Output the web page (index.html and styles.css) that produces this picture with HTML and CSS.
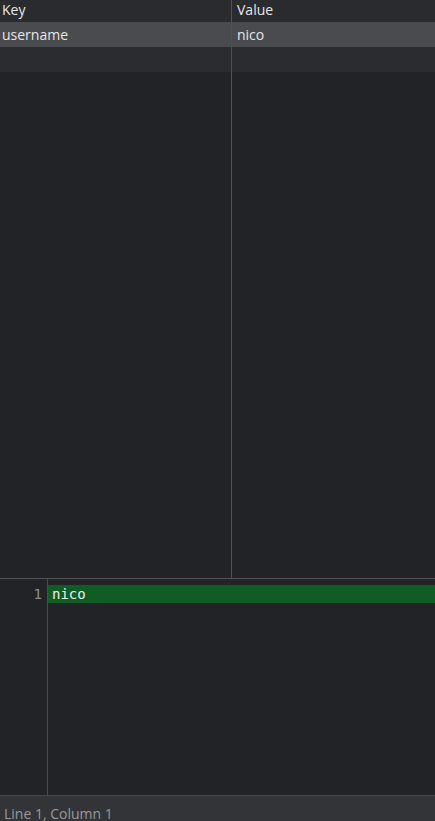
FILE: index.html
```html
<!DOCTYPE html>
<html lang="en">
  <head>
    <meta charset="UTF-8" />
    <meta name="viewport" content="width=device-width, initial-scale=1.0" />
    <title>Storage</title>
    <link rel="stylesheet" href="styles.css">
  </head>

  <body>
    <div class="app">
      <div class="grid">
        <div class="col key-col">
          <div class="cell head">Key</div>
          <div class="cell selected">username</div>
          <div class="cell empty"></div>
        </div>
        <div class="col value-col">
          <div class="cell head">Value</div>
          <div class="cell selected">nico</div>
          <div class="cell empty"></div>
        </div>
      </div>

      <div class="editor">
        <div class="gutter">
          <div class="line-no">1</div>
        </div>
        <div class="code">
          <div class="code-line active">nico</div>
        </div>
      </div>

      <div class="status">Line 1, Column 1</div>
    </div>
  </body>
</html>
```

FILE: styles.css
```css
* {
  box-sizing: border-box;
}

body {
  margin: 0;
  background-color: #222327;
  font-family: "Open Sans", "Noto Sans", sans-serif;
  font-size: 14px;
  color: #e6e6e6;
}

.app {
  display: flex;
  flex-direction: column;
  height: 100vh;
}

.grid {
  display: flex;
  height: 579px;
  border-bottom: 1px solid #505155;
}
.key-col {
  width: 232px;
  border-right: 1px solid #505155;
}
.value-col {
  flex: 1;
}
.cell {
  height: 25px;
  line-height: 25px;
  padding: 0 2px;
  white-space: nowrap;
}
.value-col .cell {
  padding-left: 5px;
}
.cell.head {
  height: 22px;
  line-height: 20px;
  background-color: #2a2b2f;
}
.cell.selected {
  background-color: #4a4b4f;
}
.cell.empty {
  background-color: #2b2c30;
}

.editor {
  flex: 1;
  display: flex;
}
.gutter {
  width: 48px;
  border-right: 1px solid #4a4b4f;
  padding-top: 6px;
}
.line-no {
  height: 18px;
  line-height: 19px;
  text-align: right;
  padding-right: 5px;
  color: #8c8c8c;
  font-family: "DejaVu Sans Mono", monospace;
  font-size: 14px;
}
.code {
  flex: 1;
  padding-top: 6px;
}
.code-line {
  height: 18px;
  line-height: 19px;
  padding-left: 4px;
  font-family: "DejaVu Sans Mono", monospace;
  font-size: 14px;
  color: #eeeeee;
}
.code-line.active {
  background-color: #0f5c25;
}

.status {
  height: 26px;
  padding-top: 4px;
  line-height: 28px;
  padding-left: 4px;
  background-color: #333438;
  border-top: 1px solid #47484c;
  color: #9a9a9a;
  font-size: 14px;
  overflow: hidden;
}
```
